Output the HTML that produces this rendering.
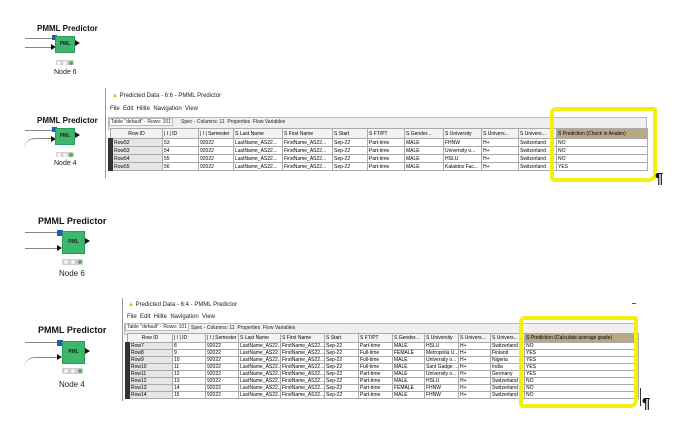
<!DOCTYPE html>
<html><head><style>
body{margin:0;width:690px;height:433px;background:#fff;position:relative;overflow:hidden;font-family:"Liberation Sans",sans-serif}
.a{position:absolute}
.nt{position:absolute;font-weight:bold;color:#111;white-space:nowrap}
.nl{position:absolute;color:#222;white-space:nowrap}
.box{position:absolute;background:#3cb86c;border:1px solid #2a9a55;font-size:5px;font-weight:bold;text-align:center;color:#222}
.port{position:absolute;background:#1a5fb4}
.tri{position:absolute;width:0;height:0;border-top:3px solid transparent;border-bottom:3px solid transparent;border-left:5px solid #111}
.lights{position:absolute;background:#cfcfcf;border-radius:1px;display:flex;justify-content:space-around;align-items:center}
.lights i{display:block;width:4px;height:4px;border-radius:50%;background:#f4f4f4}
.lights i.g{background:#4cb84c}
.ln{position:absolute;height:1px;background:#888}
.win{position:absolute;font-size:5px;color:#222}
table{border-collapse:collapse;table-layout:fixed;position:absolute}
td{border:1px solid #aaa;padding:0 1px;white-space:nowrap;overflow:hidden;font-size:5px;line-height:6px}
th{border:1px solid #aaa;background:#f3f3f3;font-weight:normal;font-size:5px;text-align:left;padding:0 1px;white-space:nowrap;overflow:hidden}
th.p{background:#b8a888}
td.rid{background:#e6e6e6;border-left:5px solid #333}
.yl{position:absolute;border:4px solid #f4ef10;border-radius:6px 3px 8px 4px}
</style></head><body>

<div class="nt" style="left:37px;top:24px;font-size:8px">PMML Predictor</div>
<div class="ln" style="left:25px;top:38px;width:30px"></div>
<div class="ln" style="left:25px;top:47px;width:28px"></div>
<div class="port" style="left:52px;top:35px;width:5px;height:5px"></div>
<div class="tri" style="left:51px;top:44px"></div>
<div class="box" style="left:55px;top:36px;width:18px;height:15px;line-height:15px">PML</div>
<div class="tri" style="left:75px;top:40px"></div>
<div class="lights" style="left:56px;top:60px;width:18px;height:5px"><i></i><i></i><i class="g"></i></div>
<div class="nl" style="left:54px;top:69px;font-size:7px">Node 6</div>

<div class="nt" style="left:37px;top:116px;font-size:8px">PMML Predictor</div>
<div class="ln" style="left:25px;top:130px;width:30px"></div>
<div class="a" style="left:24px;top:138px;width:30px;height:10px;border-top:1px solid #888;border-radius:30px 0 0 0"></div>
<div class="port" style="left:52px;top:127px;width:5px;height:5px"></div>
<div class="tri" style="left:51px;top:136px"></div>
<div class="box" style="left:55px;top:128px;width:18px;height:15px;line-height:15px">PML</div>
<div class="tri" style="left:75px;top:132px"></div>
<div class="lights" style="left:56px;top:152px;width:18px;height:5px"><i></i><i></i><i class="g"></i></div>
<div class="nl" style="left:54px;top:160px;font-size:7px">Node 4</div>

<div class="nt" style="left:38px;top:216px;font-size:9px">PMML Predictor</div>
<div class="ln" style="left:25px;top:232px;width:35px"></div>
<div class="ln" style="left:25px;top:248px;width:33px"></div>
<div class="port" style="left:57px;top:230px;width:6px;height:6px"></div>
<div class="tri" style="left:57px;top:245px"></div>
<div class="box" style="left:62px;top:231px;width:21px;height:21px;line-height:21px">PML</div>
<div class="tri" style="left:85px;top:238px"></div>
<div class="lights" style="left:62px;top:259px;width:21px;height:6px"><i></i><i></i><i class="g"></i></div>
<div class="nl" style="left:59px;top:269px;font-size:8px">Node 6</div>

<div class="nt" style="left:38px;top:325px;font-size:9px">PMML Predictor</div>
<div class="ln" style="left:25px;top:342px;width:35px"></div>
<div class="a" style="left:24px;top:357px;width:34px;height:10px;border-top:1px solid #888;border-radius:34px 0 0 0"></div>
<div class="port" style="left:57px;top:340px;width:6px;height:6px"></div>
<div class="tri" style="left:57px;top:354px"></div>
<div class="box" style="left:62px;top:341px;width:21px;height:21px;line-height:21px">PML</div>
<div class="tri" style="left:85px;top:348px"></div>
<div class="lights" style="left:62px;top:368px;width:21px;height:6px"><i></i><i></i><i class="g"></i></div>
<div class="nl" style="left:59px;top:380px;font-size:8px">Node 4</div>

<div class="a" style="left:105px;top:88px;width:1px;height:90px;background:#999"></div>
<div class="win" style="left:112px;top:93px;font-size:6px"><span style="color:#e8b400">▲</span> Predicted Data - 6:6 - PMML Predictor</div>
<div class="win" style="left:110px;top:106px;font-size:6px">File&nbsp; Edit&nbsp; Hilite&nbsp; Navigation&nbsp; View</div>
<div class="a" style="left:108px;top:117px;width:537px;height:11px;background:#efefef;border:1px solid #bbb"></div>
<div class="win" style="left:109px;top:118px;background:#fff;padding:0 1px;border:1px solid #bbb">Table "default" - Rows: 101</div>
<div class="win" style="left:181px;top:119px">Spec - Columns: 11&nbsp; Properties&nbsp; Flow Variables</div>
<table style="left:108px;top:128px;width:537px">
<colgroup><col style="width:52px"><col style="width:36px"><col style="width:35px"><col style="width:49px"><col style="width:50px"><col style="width:35px"><col style="width:37px"><col style="width:39px"><col style="width:38px"><col style="width:37px"><col style="width:38px"><col style="width:91px"></colgroup>
<tr style="height:10px"><th style="text-align:center">Row ID</th><th>| I | ID</th><th>| I | Semester</th><th>S Last Name</th><th>S First Name</th><th>S Start</th><th>S FT/PT</th><th>S Gender...</th><th>S University</th><th>S Univers...</th><th>S Univers...</th><th class="p">S Prediction (Check in Anabin)</th></tr>
<tr style="height:8px"><td class="rid">Row52</td><td>53</td><td>92022</td><td>LastName_AS22...</td><td>FirstName_AS22...</td><td>Sep-22</td><td>Part-time</td><td>MALE</td><td>FHNW</td><td>H+</td><td>Switzerland</td><td>NO</td></tr>
<tr style="height:8px"><td class="rid">Row53</td><td>54</td><td>92022</td><td>LastName_AS22...</td><td>FirstName_AS22...</td><td>Sep-22</td><td>Part-time</td><td>MALE</td><td>University o...</td><td>H+</td><td>Switzerland</td><td>NO</td></tr>
<tr style="height:8px"><td class="rid">Row54</td><td>55</td><td>92022</td><td>LastName_AS22...</td><td>FirstName_AS22...</td><td>Sep-22</td><td>Part-time</td><td>MALE</td><td>HSLU</td><td>H+</td><td>Switzerland</td><td>NO</td></tr>
<tr style="height:8px"><td class="rid">Row55</td><td>56</td><td>92022</td><td>LastName_AS22...</td><td>FirstName_AS22...</td><td>Sep-22</td><td>Part-time</td><td>MALE</td><td>Kalaidos Fac...</td><td>H+</td><td>Switzerland</td><td>YES</td></tr>
</table>
<div class="yl" style="left:550px;top:107px;width:99px;height:67px"></div>
<div class="a" style="left:655px;top:170px;font-size:15px;font-weight:bold;color:#111">¶</div>

<div class="a" style="left:122px;top:298px;width:1px;height:103px;background:#999"></div>
<div class="win" style="left:128px;top:302px;font-size:6px"><span style="color:#e8b400">▲</span> Predicted Data - 6:4 - PMML Predictor</div>
<div class="win" style="left:127px;top:314px;font-size:6px">File&nbsp; Edit&nbsp; Hilite&nbsp; Navigation&nbsp; View</div>
<div class="a" style="left:632px;top:303px;width:4px;height:1px;background:#555"></div>
<div class="a" style="left:124px;top:323px;width:512px;height:10px;background:#efefef;border:1px solid #bbb"></div>
<div class="win" style="left:125px;top:323px;background:#fff;padding:0 1px;border:1px solid #bbb">Table "default" - Rows: 101</div>
<div class="win" style="left:191px;top:325px">Spec - Columns: 11&nbsp; Properties&nbsp; Flow Variables</div>
<table style="left:125px;top:333px;width:511px">
<colgroup><col style="width:45px"><col style="width:33px"><col style="width:33px"><col style="width:42px"><col style="width:44px"><col style="width:34px"><col style="width:34px"><col style="width:32px"><col style="width:34px"><col style="width:32px"><col style="width:34px"><col style="width:114px"></colgroup>
<tr style="height:9px"><th style="text-align:center">Row ID</th><th>| I | ID</th><th>| I | Semester</th><th>S Last Name</th><th>S First Name</th><th>S Start</th><th>S FT/PT</th><th>S Gender...</th><th>S University</th><th>S Univers...</th><th>S Univers...</th><th class="p">S Prediction (Calculate average grade)</th></tr>
<tr style="height:7px"><td class="rid">Row7</td><td>8</td><td>92022</td><td>LastName_AS22...</td><td>FirstName_AS22...</td><td>Sep-22</td><td>Part-time</td><td>MALE</td><td>HSLU</td><td>H+</td><td>Switzerland</td><td>NO</td></tr>
<tr style="height:7px"><td class="rid">Row8</td><td>9</td><td>92022</td><td>LastName_AS22...</td><td>FirstName_AS22...</td><td>Sep-22</td><td>Full-time</td><td>FEMALE</td><td>Metropolia U...</td><td>H+</td><td>Finland</td><td>YES</td></tr>
<tr style="height:7px"><td class="rid">Row9</td><td>10</td><td>92022</td><td>LastName_AS22...</td><td>FirstName_AS22...</td><td>Sep-22</td><td>Full-time</td><td>MALE</td><td>University o...</td><td>H+</td><td>Nigeria</td><td>YES</td></tr>
<tr style="height:7px"><td class="rid">Row10</td><td>11</td><td>92022</td><td>LastName_AS22...</td><td>FirstName_AS22...</td><td>Sep-22</td><td>Full-time</td><td>MALE</td><td>Sant Gadge ...</td><td>H+</td><td>India</td><td>YES</td></tr>
<tr style="height:7px"><td class="rid">Row11</td><td>12</td><td>92022</td><td>LastName_AS22...</td><td>FirstName_AS22...</td><td>Sep-22</td><td>Part-time</td><td>MALE</td><td>University o...</td><td>H+</td><td>Germany</td><td>YES</td></tr>
<tr style="height:7px"><td class="rid">Row12</td><td>13</td><td>92022</td><td>LastName_AS22...</td><td>FirstName_AS22...</td><td>Sep-22</td><td>Part-time</td><td>MALE</td><td>HSLU</td><td>H+</td><td>Switzerland</td><td>NO</td></tr>
<tr style="height:7px"><td class="rid">Row13</td><td>14</td><td>92022</td><td>LastName_AS22...</td><td>FirstName_AS22...</td><td>Sep-22</td><td>Part-time</td><td>FEMALE</td><td>FHNW</td><td>H+</td><td>Switzerland</td><td>NO</td></tr>
<tr style="height:7px"><td class="rid">Row14</td><td>15</td><td>92022</td><td>LastName_AS22...</td><td>FirstName_AS22...</td><td>Sep-22</td><td>Part-time</td><td>MALE</td><td>FHNW</td><td>H+</td><td>Switzerland</td><td>NO</td></tr>
</table>
<div class="yl" style="left:519px;top:316px;width:111px;height:84px"></div>
<div class="a" style="left:640px;top:388px;width:1px;height:18px;background:#333"></div>
<div class="a" style="left:642px;top:395px;font-size:15px;font-weight:bold;color:#111">¶</div>
</body></html>
